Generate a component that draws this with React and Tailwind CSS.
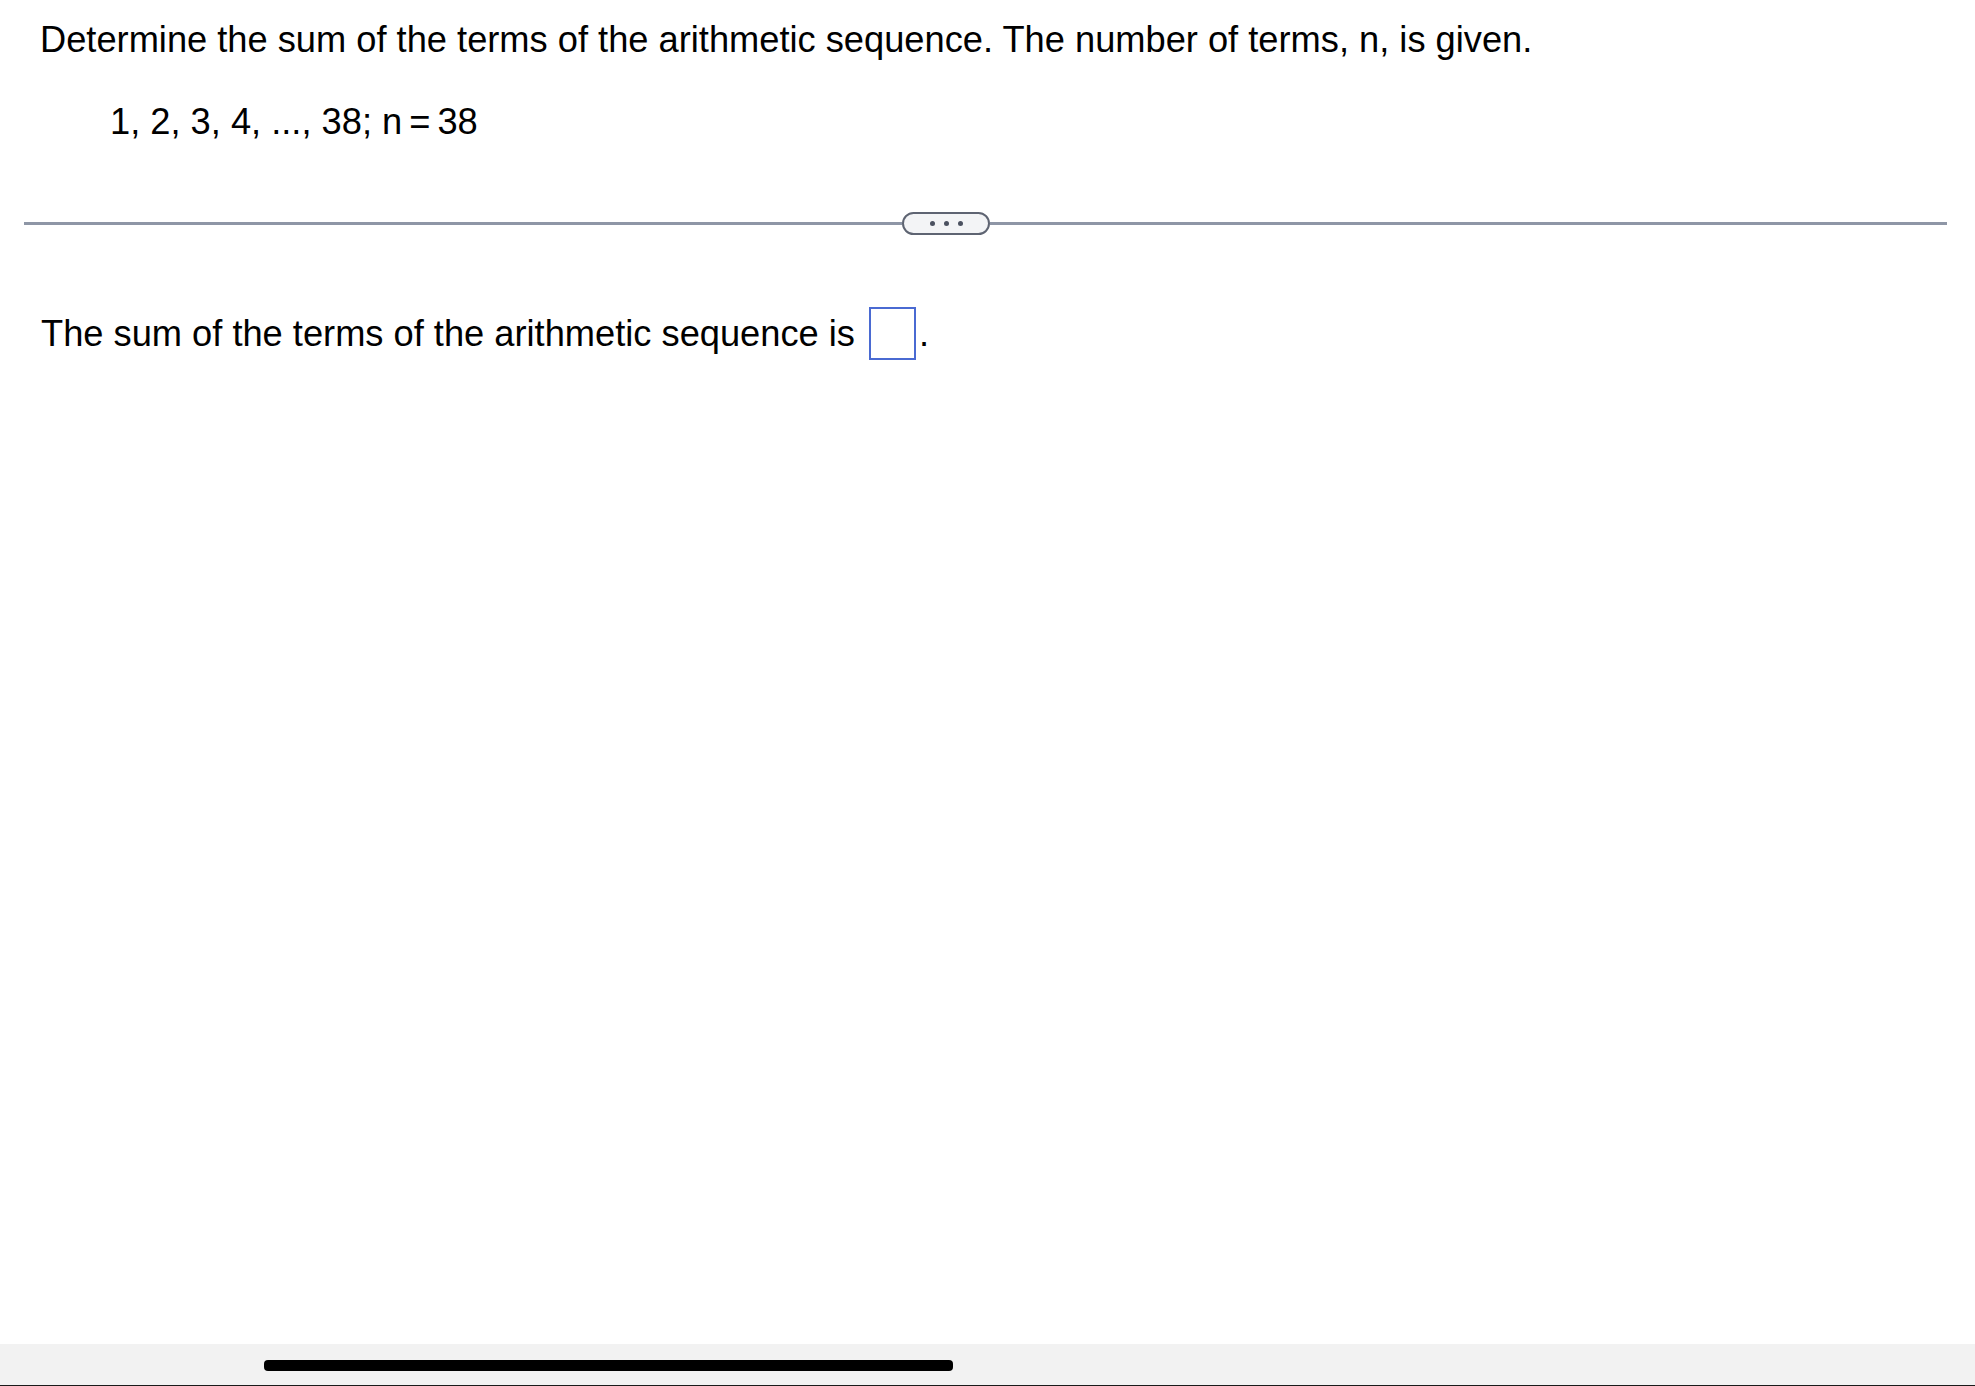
import React from "react";

export default function App() {
  return (
    <div
      className="flex min-h-screen flex-col bg-white text-black"
      style={{ fontFamily: '"Liberation Sans", Arial, sans-serif' }}
    >
      <div className="flex-1">
        <p className="pl-[40px] pt-[19px] text-[36.25px] leading-[41px]">
          Determine the sum of the terms of the arithmetic sequence. The number of terms, n, is given.
        </p>
        <p className="mt-[41px] pl-[110px] text-[36.25px] leading-[41px]">
          1, 2, 3, 4, ..., 38; n<span className="mx-[7px]">=</span>38
        </p>
        <div className="mt-[70px] ml-[24px] mr-[28px] flex items-center">
          <div className="h-[3px] w-[878px] bg-[#8e96a6]" />
          <button className="flex h-[23px] w-[88px] items-center justify-center gap-[9px] rounded-full border-2 border-[#5e6472] bg-[#f3f4f6]">
            <span className="h-[5px] w-[5px] rounded-full bg-[#4b5160]" />
            <span className="h-[5px] w-[5px] rounded-full bg-[#4b5160]" />
            <span className="h-[5px] w-[5px] rounded-full bg-[#4b5160]" />
          </button>
          <div className="h-[3px] flex-1 bg-[#8e96a6]" />
        </div>
        <div className="mt-[72px] flex items-center pl-[41px] text-[36.25px] leading-[41px]">
          <span>The sum of the terms of the arithmetic sequence is</span>
          <span className="ml-[14px] h-[53px] w-[47px] border-2 border-[#4a6ad2]" />
          <span className="ml-[3px]">.</span>
        </div>
      </div>
      <div className="h-[42px] border-b border-[#1a1a1a] bg-[#f2f2f2] pt-[16px]">
        <div className="ml-[264px] h-[11px] w-[689px] rounded-[4px] bg-black" />
      </div>
    </div>
  );
}
